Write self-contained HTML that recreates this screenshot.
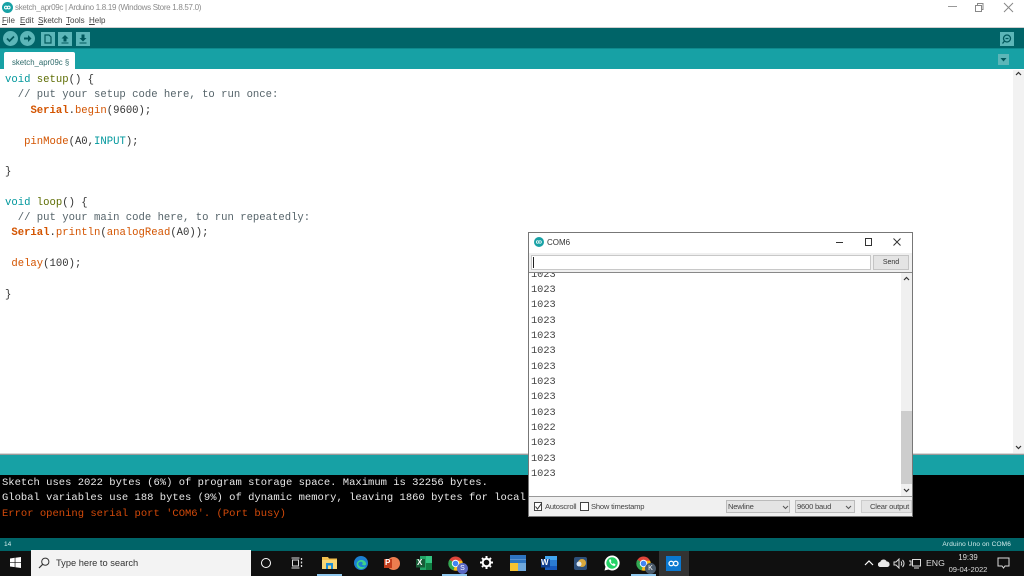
<!DOCTYPE html>
<html><head><meta charset="utf-8"><style>
html,body{margin:0;padding:0;width:1024px;height:576px;overflow:hidden;background:#fff}
div,span.a{position:absolute}
body{font-family:"Liberation Sans",sans-serif;}
.b{box-sizing:border-box}
.c{font:10.6px/15px "Liberation Mono",monospace;white-space:pre;color:#333;left:5px}
.o{font:10.52px/15px "Liberation Mono",monospace;white-space:pre;left:2px}
.n{font:10.3px/15px "Liberation Mono",monospace;color:#444;left:2px}
.t{color:#00979c}.f{color:#d35400}.s{color:#d35400;font-weight:bold}.g{color:#5e6d03}
.u{font-size:7.6px;letter-spacing:-.2px;color:#444;white-space:nowrap}
.k{background:#5cb6b8;width:14px;height:14px;top:32px}
.me{top:15px;font-size:8px;line-height:12px;color:#444;white-space:nowrap}
svg{position:absolute}
</style></head><body>
<!-- title bar -->
<svg style="left:2px;top:2px" width="11" height="11" viewBox="0 0 11 11"><circle cx="5.5" cy="5.5" r="5.5" fill="#17a1a5"/><path d="M2.5 5.5a1.4 1.4 0 0 1 2.8 0a1.4 1.4 0 0 0 2.8 0a1.4 1.4 0 0 0-2.8 0a1.4 1.4 0 0 1-2.8 0" fill="none" stroke="#fff"/></svg>
<div style="left:15px;top:2px;font-size:8px;letter-spacing:-.3px;line-height:11px;color:#8a8a8a;white-space:nowrap">sketch_apr09c | Arduino 1.8.19 (Windows Store 1.8.57.0)</div>
<div style="left:948px;top:6px;width:9px;height:1px;background:#999"></div>
<svg style="left:973px;top:2px" width="11" height="11" viewBox="0 0 11 11"><path d="M2.5 3.500h6v6h-6zM4.500 3.500v-2h5.500v6h-1.500" fill="none" stroke="#888"/></svg>
<svg style="left:1003px;top:2px" width="11" height="11" viewBox="0 0 11 11"><path d="M1 1l9 9M10 1l-9 9" stroke="#888" fill="none"/></svg>
<div class="me" style="left:2px"><u>F</u>ile</div>
<div class="me" style="left:20px"><u>E</u>dit</div>
<div class="me" style="left:38px"><u>S</u>ketch</div>
<div class="me" style="left:66px"><u>T</u>ools</div>
<div class="me" style="left:89px"><u>H</u>elp</div>
<!-- toolbar -->
<div style="left:0;top:27px;width:1024px;height:1px;background:#cfcfcf"></div>
<div style="left:0;top:28px;width:1024px;height:21px;background:#006468"></div>
<div style="left:0;top:48px;width:1024px;height:1px;background:#0e8a8e"></div>
<div style="left:3px;top:31px;width:15px;height:15px;border-radius:50%;background:#5cb6b8"></div>
<svg style="left:3px;top:31px" width="15" height="15" viewBox="0 0 15 15"><path d="M4 7.500l2.500 2.500 4.500-4.500" fill="none" stroke="#00585c" stroke-width="1.700"/></svg>
<div style="left:20px;top:31px;width:15px;height:15px;border-radius:50%;background:#5cb6b8"></div>
<svg style="left:20px;top:31px" width="15" height="15" viewBox="0 0 15 15"><path d="M4 6.500h4v-2.500l3.500 3.500-3.500 3.500v-2.500h-4z" fill="#00585c"/></svg>
<div class="k" style="left:41px"></div>
<svg style="left:41px;top:32px" width="14" height="14" viewBox="0 0 14 14"><path d="M4 3h4l2 2v6h-6z" fill="none" stroke="#00585c" stroke-width="1.200"/></svg>
<div class="k" style="left:58px"></div>
<svg style="left:58px;top:32px" width="14" height="14" viewBox="0 0 14 14"><path d="M7 3l3.500 3.500h-2v3h-3v-3h-2zM3.500 10.500h7v1h-7z" fill="#00585c"/></svg>
<div class="k" style="left:76px"></div>
<svg style="left:76px;top:32px" width="14" height="14" viewBox="0 0 14 14"><path d="M5.500 2.500h3v3.500h2l-3.500 3.500-3.500-3.500h2zM3.500 10.500h7v1h-7z" fill="#00585c"/></svg>
<div class="k" style="left:1000px"></div>
<svg style="left:1000px;top:32px" width="14" height="14" viewBox="0 0 14 14"><circle cx="7" cy="6.500" r="3.500" fill="none" stroke="#00585c" stroke-width="1.300"/><path d="M4.500 9l-2 2.500M5.500 6.500h3" stroke="#00585c" stroke-width="1.300"/></svg>
<!-- tab row -->
<div style="left:0;top:49px;width:1024px;height:20px;background:#17a1a5"></div>
<div style="left:4px;top:52px;width:71px;height:18px;background:#fff;border-radius:2px 2px 0 0"></div>
<div style="left:12px;top:57px;font-size:7.8px;line-height:11px;color:#2d6a6a;white-space:nowrap">sketch_apr09c §</div>
<div style="left:998px;top:54px;width:11px;height:11px;background:#5cb6b8"></div>
<svg style="left:998px;top:54px" width="11" height="11" viewBox="0 0 11 11"><path d="M2.500 4h6l-3 3.500z" fill="#00585c"/></svg>
<!-- code -->
<div class="c" style="top:73px"><span class="t">void</span> <span class="g">setup</span>() {</div>
<div class="c" style="top:88px;color:#56646a">  // put your setup code here, to run once:</div>
<div class="c" style="top:104px">    <span class="s">Serial</span>.<span class="f">begin</span>(9600);</div>
<div class="c" style="top:135px">   <span class="f">pinMode</span>(A0,<span class="t">INPUT</span>);</div>
<div class="c" style="top:165px">}</div>
<div class="c" style="top:196px"><span class="t">void</span> <span class="g">loop</span>() {</div>
<div class="c" style="top:211px;color:#56646a">  // put your main code here, to run repeatedly:</div>
<div class="c" style="top:226px"> <span class="s">Serial</span>.<span class="f">println</span>(<span class="f">analogRead</span>(A0));</div>
<div class="c" style="top:257px"> <span class="f">delay</span>(100);</div>
<div class="c" style="top:288px">}</div>
<!-- editor scrollbar right -->
<div style="left:1013px;top:70px;width:11px;height:384px;background:#f2f2f2"></div>
<svg style="left:1015px;top:71px" width="7" height="5" viewBox="0 0 7 5"><path d="M1 4l2.500-2.500L6 4" fill="none" stroke="#333" stroke-width="1.200"/></svg>
<svg style="left:1015px;top:445px" width="7" height="5" viewBox="0 0 7 5"><path d="M1 1l2.500 2.500L6 1" fill="none" stroke="#333" stroke-width="1.200"/></svg>
<div style="left:0;top:453px;width:1024px;height:1px;background:#d8d8d8"></div>
<div style="left:0;top:454px;width:1024px;height:1px;background:#9a9a9a"></div>
<!-- status band -->
<div style="left:0;top:455px;width:1024px;height:20px;background:#17a1a5"></div>
<!-- console -->
<div style="left:0;top:475px;width:1024px;height:63px;background:#000"></div>
<div class="o" style="top:476px;color:#e8e8e8">Sketch uses 2022 bytes (6%) of program storage space. Maximum is 32256 bytes.</div>
<div class="o" style="top:491px;color:#e8e8e8">Global variables use 188 bytes (9%) of dynamic memory, leaving 1860 bytes for local variables.</div>
<div class="o" style="top:507px;color:#d34a0a">Error opening serial port 'COM6'. (Port busy)</div>
<!-- footer -->
<div style="left:0;top:538px;width:1024px;height:13px;background:#006468"></div>
<div style="left:4px;top:540px;font-size:6.500px;line-height:9px;color:#d5eeee">14</div>
<div style="right:13px;top:540px;font-size:6.500px;line-height:9px;color:#d5eeee;white-space:nowrap;letter-spacing:.15px">Arduino Uno on COM6</div>
<!-- taskbar -->
<div style="left:0;top:551px;width:1024px;height:25px;background:#101010"></div>
<svg style="left:10px;top:557px" width="11" height="11" viewBox="0 0 11 11"><path d="M0 1.500l4.700-.7v4.300H0zM5.400.7L11 0v5.100H5.400zM0 5.800h4.700v4.300L0 9.500zM5.400 5.800H11V11l-5.600-.8z" fill="#fff"/></svg>
<div style="left:31px;top:550px;width:220px;height:26px;background:#f3f3f3"></div>
<svg style="left:38px;top:557px" width="12" height="12" viewBox="0 0 12 12"><circle cx="7.300" cy="4.700" r="3.600" fill="none" stroke="#333" stroke-width="1"/><path d="M4.700 7.300L1 11" stroke="#333" stroke-width="1.200"/></svg>
<div style="left:56px;top:557px;font-size:9.300px;line-height:13px;color:#333;white-space:nowrap">Type here to search</div>
<div class="b" style="left:261px;top:558px;width:10px;height:10px;border-radius:50%;border:1.700px solid #fff"></div>
<svg style="left:291px;top:557px" width="12" height="12" viewBox="0 0 12 12"><path d="M1.500 3h6v6h-6zM.5 1h8M.5 11h8" fill="none" stroke="#ddd"/><path d="M10.500 1v2M10.500 4.500v2M10.500 8v2" stroke="#ddd" stroke-width="1.300"/></svg>
<!-- explorer -->
<svg style="left:322px;top:556px" width="15" height="14" viewBox="0 0 15 14"><path d="M0 1h6l1 1.500h8V13H0z" fill="#f3c04e"/><path d="M0 4h15v9H0z" fill="#f8d775"/><path d="M4 7h7v6H4z" fill="#1f8fd6"/><path d="M6 9.500h3V13H6z" fill="#f8d775"/></svg>
<div style="left:317px;top:574px;width:25px;height:2px;background:#8ec6ec"></div>
<!-- edge -->
<svg style="left:353px;top:556px" width="16" height="14" viewBox="0 0 16 16"><circle cx="8" cy="8" r="8" fill="#1b7fd0"/><path d="M3 9c1-6 10-6 11 0c0 2-3 2-5 1c3-3-2-5-4-2c-1 3 3 6 8 4c-3 5-10 3-10-3z" fill="#3ed28a"/></svg>
<!-- ppt -->
<svg style="left:384px;top:557px" width="16" height="13" viewBox="0 0 16 13"><circle cx="9.500" cy="6.500" r="6.500" fill="#ed7d4f"/><path d="M0 2h8v9H0z" fill="#c43e1c"/></svg>
<div style="left:385px;top:558px;font-size:8px;line-height:10px;font-weight:bold;color:#fff">P</div>
<!-- excel -->
<svg style="left:416px;top:556px" width="16" height="14" viewBox="0 0 16 14"><path d="M4 0h12v14H4z" fill="#21a366"/><path d="M10 0h6v7h-6z" fill="#33c481"/><path d="M10 7h6v7h-6z" fill="#107c41"/><path d="M0 3h9v8.500H0z" fill="#185c37"/></svg>
<div style="left:417px;top:558px;font-size:8px;line-height:10px;font-weight:bold;color:#fff">X</div>
<!-- chrome S -->
<svg style="left:448px;top:556px" width="15" height="15" viewBox="0 0 16 16"><circle cx="8" cy="8" r="7.500" fill="#e0453a"/><path d="M8 8L1.500 4A7.500 7.500 0 0 0 6 15.300z" fill="#31a853"/><path d="M8 8L6 15.300A7.500 7.500 0 0 0 15 5h-7z" fill="#f9bc15"/><circle cx="8" cy="8" r="3.500" fill="#4285f4" stroke="#fff"/></svg>
<div style="left:457px;top:563px;width:11px;height:11px;border-radius:50%;background:#5a68c4;color:#fff;font-size:7px;line-height:11px;text-align:center">S</div>
<div style="left:442px;top:574px;width:25px;height:2px;background:#8ec6ec"></div>
<!-- gear -->
<svg style="left:480px;top:556px" width="13" height="13" viewBox="0 0 13 13"><circle cx="6.500" cy="6.500" r="3.800" fill="none" stroke="#fff" stroke-width="2"/><path d="M6.500 0v13M0 6.500h13M2 2l9 9M11 2l-9 9" stroke="#fff" stroke-width="2" stroke-dasharray="2 9"/></svg>
<!-- calc app -->
<svg style="left:510px;top:555px" width="16" height="16" viewBox="0 0 16 16"><path d="M0 0h16v8H0z" fill="#2e74c0"/><path d="M0 8h8v8H0z" fill="#f7c331"/><path d="M8 8h8v8H8z" fill="#6fa8dc"/><path d="M0 4h16v1H0z" fill="#5a93d0"/></svg>
<!-- word -->
<svg style="left:541px;top:556px" width="16" height="14" viewBox="0 0 16 14"><path d="M4 0h12v14H4z" fill="#2b7cd3"/><path d="M4 0h12v4H4z" fill="#41a5ee"/><path d="M4 10h12v4H4z" fill="#185abd"/><path d="M0 3h9v8.500H0z" fill="#103f91"/></svg>
<div style="left:541px;top:558px;font-size:8px;line-height:10px;font-weight:bold;color:#fff">W</div>
<!-- media app -->
<svg style="left:573px;top:556px" width="15" height="15" viewBox="0 0 15 15"><rect x="1" y="1" width="13" height="13" rx="2" fill="#2d4f7a"/><circle cx="9" cy="7" r="4" fill="#d8a83c"/><circle cx="6" cy="8" r="2.500" fill="#dce8f4"/></svg>
<!-- whatsapp -->
<svg style="left:604px;top:555px" width="16" height="16" viewBox="0 0 16 16"><path d="M8 .5A7.500 7.500 0 0 0 1.500 11.700L.5 15.500l3.900-1A7.500 7.500 0 1 0 8 .5z" fill="#fff"/><circle cx="8" cy="8" r="5.700" fill="#25d366"/><path d="M5.500 4.500c-1.500 2 2.500 7 5.500 6.300l.5-1.600-2-1-.8.800c-1-.5-1.500-1.100-2-2l.7-.8-.8-2z" fill="#fff"/></svg>
<!-- chrome K -->
<svg style="left:636px;top:556px" width="15" height="15" viewBox="0 0 16 16"><circle cx="8" cy="8" r="7.500" fill="#e0453a"/><path d="M8 8L1.500 4A7.500 7.500 0 0 0 6 15.300z" fill="#31a853"/><path d="M8 8L6 15.300A7.500 7.500 0 0 0 15 5h-7z" fill="#f9bc15"/><circle cx="8" cy="8" r="3.500" fill="#4285f4" stroke="#fff"/></svg>
<div style="left:645px;top:563px;width:11px;height:11px;border-radius:50%;background:#4a5a6a;color:#fff;font-size:7px;line-height:11px;text-align:center">K</div>
<div style="left:631px;top:574px;width:25px;height:2px;background:#8ec6ec"></div>
<!-- arduino active -->
<div style="left:659px;top:551px;width:30px;height:25px;background:#333"></div>
<div style="left:666px;top:556px;width:15px;height:15px;background:#0a78d0"></div>
<svg style="left:668px;top:560px" width="11" height="7" viewBox="0 0 11 7"><path d="M1 3.500a2 2 0 0 1 4.500 0a2 2 0 0 0 4.500 0a2 2 0 0 0-4.500 0a2 2 0 0 1-4.500 0" fill="none" stroke="#fff" stroke-width="1.300"/></svg>
<!-- tray -->
<svg style="left:864px;top:560px" width="10" height="6" viewBox="0 0 10 6"><path d="M1 5l4-4 4 4" fill="none" stroke="#fff" stroke-width="1.200"/></svg>
<svg style="left:878px;top:559px" width="12" height="8" viewBox="0 0 12 8"><path d="M2.500 8a2.500 2.500 0 0 1-.3-5A3.500 3.500 0 0 1 8.700 2.500 2.800 2.800 0 0 1 9.500 8z" fill="#e8e8e8"/></svg>
<svg style="left:893px;top:558px" width="13" height="11" viewBox="0 0 13 11"><path d="M1 4h2l3-3v9l-3-3H1zM8 3.500c1 1 1 3 0 4M9.500 2c2 2 2 5 0 7" fill="none" stroke="#ddd"/></svg>
<svg style="left:909px;top:558px" width="12" height="11" viewBox="0 0 12 11"><path d="M3.500 1.500h8v6.500h-8zM5 10h5M0 3h2v4H0" fill="none" stroke="#ddd"/></svg>
<div style="left:926px;top:557px;font-size:8.700px;line-height:12px;color:#ddd">ENG</div>
<div style="left:950px;top:552px;width:36px;text-align:center;font-size:7.800px;line-height:11px;color:#ddd">19:39</div>
<div style="left:948px;top:564px;width:40px;text-align:center;font-size:7.600px;line-height:11px;color:#ddd;white-space:nowrap">09-04-2022</div>
<svg style="left:997px;top:557px" width="13" height="12" viewBox="0 0 13 12"><path d="M1 1h11v8H8l-1.500 2L5 9H1z" fill="none" stroke="#ddd"/></svg>
<!-- serial monitor -->
<div class="b" style="left:528px;top:232px;width:385px;height:285px;background:#f0f0f0;border:1px solid #777"></div>
<div style="left:529px;top:233px;width:383px;height:20px;background:#fff"></div>
<svg style="left:534px;top:237px" width="10" height="10" viewBox="0 0 11 11"><circle cx="5.500" cy="5.500" r="5.500" fill="#17a1a5"/><path d="M2.500 5.500a1.400 1.400 0 0 1 2.800 0a1.400 1.400 0 0 0 2.800 0a1.400 1.400 0 0 0-2.800 0a1.400 1.400 0 0 1-2.800 0" fill="none" stroke="#fff" stroke-width=".8"/></svg>
<div style="left:547px;top:237px;font-size:8px;line-height:11px;color:#333">COM6</div>
<div style="left:836px;top:242px;width:7px;height:1px;background:#333"></div>
<div class="b" style="left:865px;top:238px;width:7px;height:8px;border:1px solid #333"></div>
<svg style="left:893px;top:238px" width="8" height="8" viewBox="0 0 8 8"><path d="M.5.500l7 7M7.500.500l-7 7" stroke="#333"/></svg>
<div class="b" style="left:531px;top:255px;width:340px;height:15px;background:#fff;border:1px solid #c8c8c8"></div>
<div style="left:533px;top:257px;width:1px;height:11px;background:#222"></div>
<div class="b" style="left:873px;top:255px;width:36px;height:15px;background:#e4e4e4;border:1px solid #c4c4c4;font-size:7px;line-height:13px;text-align:center;color:#333">Send</div>
<div style="left:529px;top:272px;width:383px;height:1px;background:#888"></div>
<div style="left:529px;top:273px;width:372px;height:223px;background:#fff;overflow:hidden">
<div class="n" style="top:-5px">1023</div>
<div class="n" style="top:10px">1023</div>
<div class="n" style="top:25px">1023</div>
<div class="n" style="top:41px">1023</div>
<div class="n" style="top:56px">1023</div>
<div class="n" style="top:71px">1023</div>
<div class="n" style="top:87px">1023</div>
<div class="n" style="top:102px">1023</div>
<div class="n" style="top:117px">1023</div>
<div class="n" style="top:133px">1023</div>
<div class="n" style="top:148px">1022</div>
<div class="n" style="top:163px">1023</div>
<div class="n" style="top:179px">1023</div>
<div class="n" style="top:194px">1023</div>
</div>
<div style="left:901px;top:273px;width:11px;height:223px;background:#f0f0f0"></div>
<div style="left:901px;top:411px;width:11px;height:73px;background:#cdcdcd"></div>
<svg style="left:903px;top:276px" width="7" height="5" viewBox="0 0 7 5"><path d="M1 4l2.500-2.500L6 4" fill="none" stroke="#333" stroke-width="1.200"/></svg>
<svg style="left:903px;top:488px" width="7" height="5" viewBox="0 0 7 5"><path d="M1 1l2.500 2.500L6 1" fill="none" stroke="#333" stroke-width="1.200"/></svg>
<div style="left:529px;top:496px;width:383px;height:1px;background:#999"></div>
<div class="b" style="left:534px;top:502px;width:8px;height:9px;background:#fff;border:1px solid #444"></div>
<svg style="left:534px;top:502px" width="9" height="9" viewBox="0 0 9 9"><path d="M1.500 4.500l2 2.500 4-5.500" fill="none" stroke="#333"/></svg>
<div class="u" style="left:545px;top:501px;line-height:11px">Autoscroll</div>
<div class="b" style="left:580px;top:502px;width:9px;height:9px;background:#fff;border:1px solid #444"></div>
<div class="u" style="left:591px;top:501px;line-height:11px">Show timestamp</div>
<div class="b u" style="left:726px;top:500px;width:64px;height:13px;background:#e4e4e4;border:1px solid #bbb;padding-left:1px;line-height:11px">Newline</div>
<svg style="left:782px;top:505px" width="7" height="5" viewBox="0 0 7 5"><path d="M1 1l2.500 2.500L6 1" fill="none" stroke="#555"/></svg>
<div class="b u" style="left:795px;top:500px;width:60px;height:13px;background:#e4e4e4;border:1px solid #bbb;padding-left:1px;line-height:11px">9600 baud</div>
<svg style="left:845px;top:505px" width="7" height="5" viewBox="0 0 7 5"><path d="M1 1l2.500 2.500L6 1" fill="none" stroke="#555"/></svg>
<div class="b u" style="left:861px;top:500px;width:51px;height:13px;background:#e4e4e4;border:1px solid #ccc;line-height:11px;text-align:right;padding-right:2px">Clear output</div>
</body></html>
